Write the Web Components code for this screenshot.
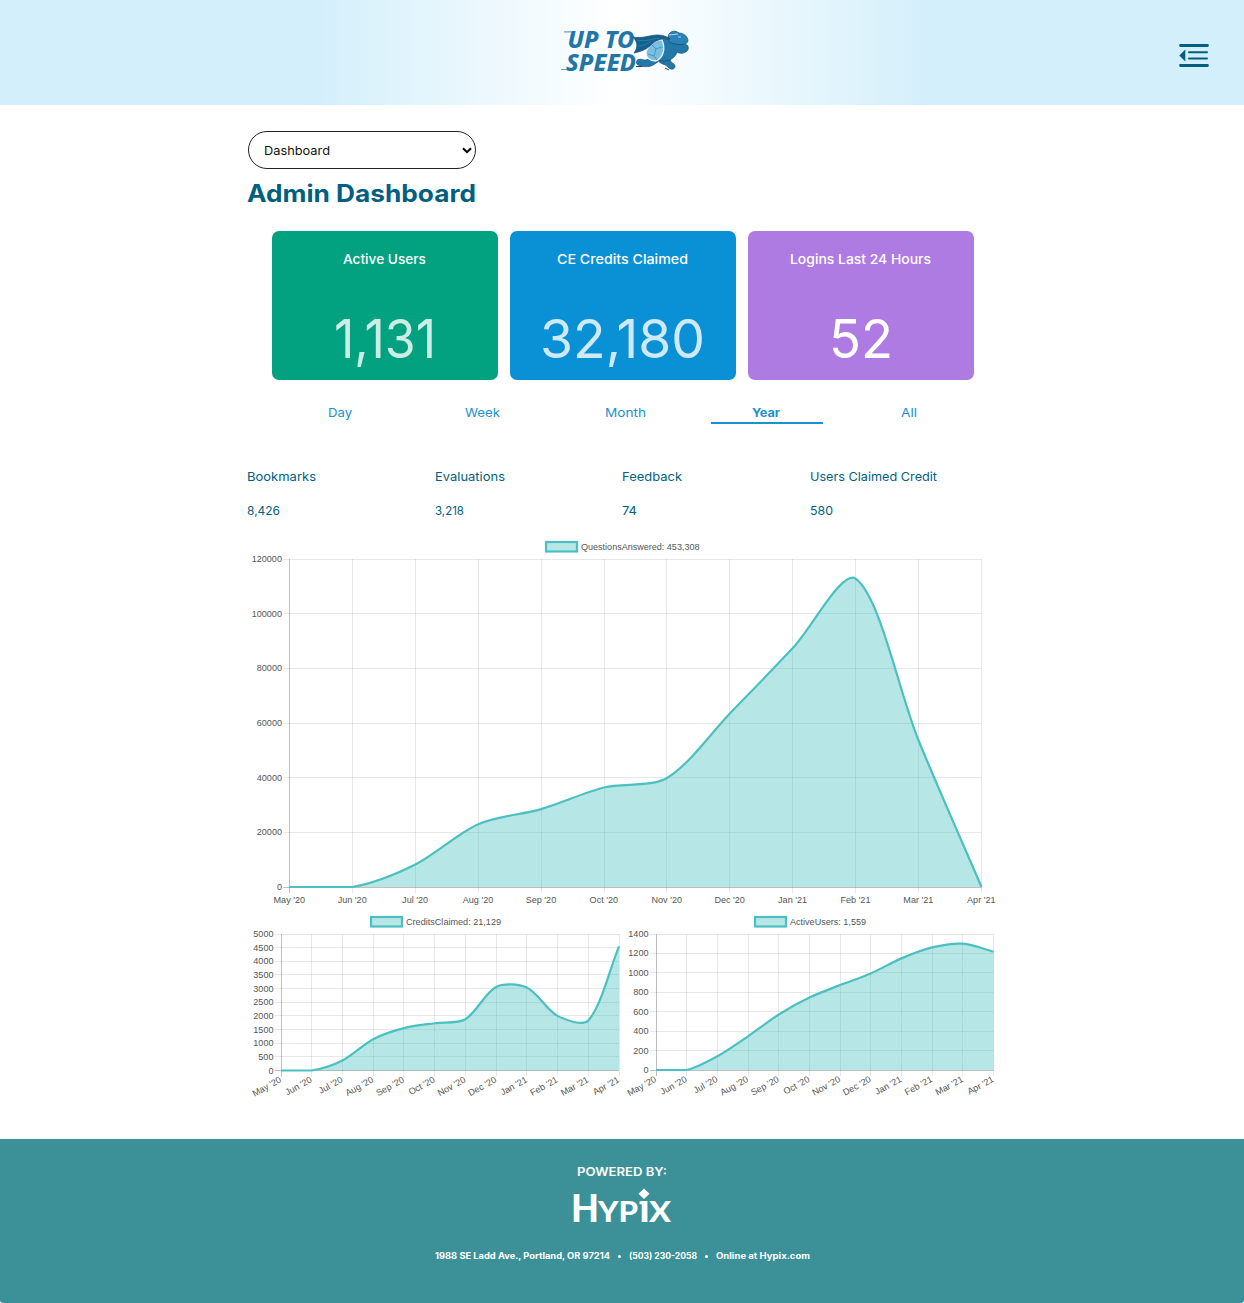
<!DOCTYPE html>
<html lang="en">
<head>
<meta charset="utf-8">
<title>Admin Dashboard</title>
<style>
    body {
        margin: 0;
        background: #fff;
        color: #035f7f;
        font-family: Inter, "Open Sans", sans-serif;
        font-size: 12px;
    }
</style>
</head>
<body>
<admin-page></admin-page>

<script>
(function () {
    // Text stretched to a fixed width, whatever the font's own widths are
    class FitText extends HTMLElement {
        constructor() {
            super();
            this.attachShadow({mode: 'open'}).innerHTML = `
                <style>
                    :host { display: inline-block; white-space: nowrap; }
                    span { display: inline-block; transform-origin: 0 50%; }
                </style>
                <span><slot></slot></span>
            `;
        }

        connectedCallback() {
            const span = this.shadowRoot.querySelector('span');
            const width = parseFloat(this.getAttribute('width'));
            this.style.width = 'auto';
            const natural = span.getBoundingClientRect().width;
            this.style.width = width + 'px';
            if (natural) {
                span.style.transform = 'scaleX(' + width / natural + ')';
            }
        }
    }

    class SiteHeader extends HTMLElement {
        constructor() {
            super();
            this.attachShadow({mode: 'open'}).innerHTML = `
                <style>
                    :host {
                        display: grid;
                        grid-template-columns: 1fr auto 1fr;
                        height: 105px;
                        background: linear-gradient(90deg, #d3effb 25%, #fff 50%, #d3effb 75%);
                    }
                    .logo { grid-column: 2; margin: 24px 0 0 5px; width: 140px; height: 54px; overflow: visible; }
                    .menu { grid-column: 3; justify-self: end; margin: 42px 34px 0 0; width: 32px; height: 27px; }
                    svg { display: block; }
                    text {
                        font: italic 800 22.5px "Noto Sans", "Open Sans", sans-serif;
                        fill: #2176a8;
                    }
                </style>
                <svg class="logo" viewBox="0 0 140 54">
                    <path d="M9 7.800h7M6 45.500h8" stroke="#5fa3c9" stroke-width="1.200"/>
                    <text x="12.500" y="24" textLength="67" lengthAdjust="spacingAndGlyphs">UP TO</text>
                    <text x="11" y="46.500" textLength="70" lengthAdjust="spacingAndGlyphs">SPEED</text>
                    <g stroke="#174a6b" stroke-width=".7" stroke-linejoin="round">
                        <path fill="#2378aa" d="M97 30c-4 5-4 6-8 6-5-2-9 0-7 4 3 3 10 3 14 2 5-2 8-5 10-8z"/>
                        <path fill="#2378aa" d="M105 34c6 0 11 1 11 4 1 1 4 2 4 4 0 4-5 4-7 1-2-3-9-3-10-7z"/>
                        <path fill="#2378aa" d="M107 16c7-2 13 1 14 5 3-4 9-2 12 1 1 4-1 6-5 7-3 1-6-1-6-1-2 6-8 10-16 9-6-2-7-12 1-21z"/>
                        <path fill="#2a83b5" d="M113 14c0-6 6-9 11-5 5 0 9 4 9 8-1 4-8 4-12 3-4 0-8-2-8-6z"/>
                        <path fill="#79bde0" stroke="#eaf6fc" stroke-width="1.300" d="M107 16c-5-1-13 4-16 12 0 5 3 9 10 9 7-3 10-12 6-21z"/>
                        <path fill="none" stroke="#3486b4" d="M97 21l4 4 6-2m-6 2-2 7-6-2m6 2 3 4"/>
                        <path fill="#16608f" d="M78 13c9 2 17-2 24-2 5 0 9 1 13 4-8-1-14 1-18 5-5 5-9 7-18 9 4-5 4-11-1-16z"/>
                        <path fill="none" stroke="#3486b4" d="M82 16c9 2 15-1 22-2M83 22c6 0 9-2 13-5"/>
                    </g>
                    <path d="M114 11l9-1M123 13h3" stroke="#a9dafa" fill="none"/>
                    <path d="M81 42.500h6M110 44l4 2" stroke="#174a6b" fill="none"/>
                </svg>
                <svg class="menu" viewBox="0 0 32 27" stroke="#035f7f" stroke-linecap="round">
                    <path stroke-width="2.800" d="M2.500 3.500h27M2.500 23.500h27"/>
                    <path stroke-width="2" d="M11 10.300h18M11 16.500h18"/>
                    <path fill="#035f7f" stroke="none" d="M7.300 7.500v12L1.300 13.500z"/>
                </svg>
            `;
        }
    }

    class PageSelect extends HTMLElement {
        constructor() {
            super();
            this.attachShadow({mode: 'open'}).innerHTML = `
                <style>
                    :host {
                        display: flex;
                        align-items: center;
                        justify-content: space-between;
                        box-sizing: border-box;
                        width: 228px;
                        height: 38px;
                        padding: 0 3px 0 15px;
                        border: 1px solid #222;
                        border-radius: 19px;
                        color: #111;
                    }
                </style>
                <slot></slot>
                <svg width="10" height="7" viewBox="0 0 10 7"><path d="M1 1.200l4 4 4-4" fill="none" stroke="#000" stroke-width="2"/></svg>
            `;
        }
    }

    class StatCard extends HTMLElement {
        constructor() {
            super();
            this.attachShadow({mode: 'open'}).innerHTML = `
                <style>
                    :host {
                        display: flex;
                        flex-direction: column;
                        align-items: center;
                        box-sizing: border-box;
                        height: 149px;
                        padding: 19px 1px 0 0;
                        border-radius: 7px;
                        color: #fff;
                        background: var(--card-color);
                    }
                    .title { font-size: 13.500px; font-weight: 500; line-height: 18px; }
                    .value {
                        margin-top: 41px;
                        font-size: 54px;
                        font-weight: 400;
                        line-height: 60px;
                        color: var(--value-color, #fff);
                    }
                </style>
                <div class="title"><slot name="title"></slot></div>
                <div class="value"><slot></slot></div>
            `;
        }
    }

    class RangeTab extends HTMLElement {
        constructor() {
            super();
            this.attachShadow({mode: 'open'}).innerHTML = `
                <style>
                    :host {
                        display: block;
                        box-sizing: border-box;
                        width: 112px;
                        height: 22px;
                        padding-right: 2px;
                        line-height: 21px;
                        text-align: center;
                        color: #1a91d0;
                    }
                    :host([active]) { font-weight: 700; border-bottom: 2px solid #1a91d0; }
                </style>
                <slot></slot>
            `;
        }
    }

    class StatItem extends HTMLElement {
        constructor() {
            super();
            this.attachShadow({mode: 'open'}).innerHTML = `
                <style>
                    :host { display: flex; flex-direction: column; gap: 14px; line-height: 20px; }
                </style>
                <slot name="label"></slot>
                <slot></slot>
            `;
        }
    }

    const MONTHS = ["May '20", "Jun '20", "Jul '20", "Aug '20", "Sep '20", "Oct '20",
        "Nov '20", "Dec '20", "Jan '21", "Feb '21", "Mar '21", "Apr '21"];

    class AreaChart extends HTMLElement {
        constructor() {
            super();
            this.attachShadow({mode: 'open'});
        }

        connectedCallback() {
            const nums = name => this.getAttribute(name).split(',').map(Number);
            const [w, h] = nums('size');
            const [left, top, right, bottom] = nums('area');
            const [legendX, legendWidth] = nums('legend');
            const [max, step] = nums('scale');
            const values = nums('values');
            const tilted = this.hasAttribute('tilted');
            const px = i => left + (right - left) * i / (values.length - 1);
            const py = v => bottom - (bottom - top) * v / max;
            const points = values.map((v, i) => ({x: px(i), y: py(v)}));
            let grid = '';
            let labels = '';

            for (let v = 0; v <= max; v += step) {
                const y = Math.floor(py(v)) + .5;
                grid += `<path d="M${left - 6} ${y}H${right}" ${v === 0 ? 'class="zero"' : ''}/>`;
                labels += `<text x="${left - 7.5}" y="${py(v) + 3}" text-anchor="end">${v}</text>`;
            }
            MONTHS.forEach((month, i) => {
                const x = Math.floor(px(i)) + .5;
                grid += `<path d="M${x} ${top}V${bottom + 6}" ${i === 0 ? 'class="zero"' : ''}/>`;
                labels += tilted
                    ? `<text transform="translate(${px(i) + 1} ${bottom + 11}) rotate(-29)" text-anchor="end">${month}</text>`
                    : `<text x="${px(i) - .2}" y="${bottom + 15.5}" text-anchor="middle">${month}</text>`;
            });

            const line = this._curve(points, top, bottom);
            this.shadowRoot.innerHTML = `
                <style>
                    :host { display: block; width: ${w}px; height: ${h}px; }
                    svg { display: block; }
                    text { font: 9.1px "Liberation Sans", Arial, sans-serif; fill: #555; }
                    .grid path { stroke: rgba(0, 0, 0, .09); fill: none; }
                    .grid .zero { stroke: rgba(0, 0, 0, .25); }
                    .box, .fill { fill: rgba(75, 192, 192, .4); }
                    .box, .line { stroke: #4bc0c0; stroke-width: 2.2; }
                    .line { fill: none; }
                </style>
                <svg width="${w}" height="${h}" viewBox="0 0 ${w} ${h}">
                    <rect class="box" x="${legendX + 1}" y="${top - 17}" width="31" height="9.500"/>
                    <text x="${legendX + 36}" y="${top - 9}" textLength="${legendWidth}" lengthAdjust="spacingAndGlyphs">${this.getAttribute('label')}</text>
                    <g class="grid">${grid}</g>
                    <path class="fill" d="${line}L${right} ${bottom}L${left} ${bottom}Z"/>
                    <svg x="${left}" y="${top - 2}" width="${right - left + 1}" height="${bottom - top + 4}" viewBox="${left} ${top - 2} ${right - left + 1} ${bottom - top + 4}">
                        <path class="line" d="${line}"/>
                    </svg>
                    ${labels}
                </svg>
            `;
        }

        // Bezier path through the points, handles kept inside the plot
        _curve(points, top, bottom) {
            const tension = .3;
            const clamp = y => Math.max(top, Math.min(bottom, y));
            const handles = points.map((p, i) => {
                const prev = points[i - 1] || p;
                const next = points[i + 1] || p;
                const d01 = Math.hypot(p.x - prev.x, p.y - prev.y);
                const d12 = Math.hypot(next.x - p.x, next.y - p.y);
                const fa = tension * d01 / (d01 + d12);
                const fb = tension * d12 / (d01 + d12);
                return {
                    inX: p.x - fa * (next.x - prev.x),
                    inY: clamp(p.y - fa * (next.y - prev.y)),
                    outX: p.x + fb * (next.x - prev.x),
                    outY: clamp(p.y + fb * (next.y - prev.y))
                };
            });
            let d = `M${points[0].x} ${points[0].y}`;
            for (let i = 1; i < points.length; i++) {
                const a = handles[i - 1];
                const b = handles[i];
                d += `C${a.outX} ${a.outY} ${b.inX} ${b.inY} ${points[i].x} ${points[i].y}`;
            }
            return d;
        }
    }

    class SiteFooter extends HTMLElement {
        constructor() {
            super();
            this.attachShadow({mode: 'open'}).innerHTML = `
                <style>
                    :host {
                        display: flex;
                        flex-direction: column;
                        align-items: center;
                        box-sizing: border-box;
                        height: 164px;
                        padding-top: 23px;
                        border-radius: 0 0 3px 3px;
                        background: #3c9199;
                        color: #fff;
                        font-weight: 600;
                    }
                    .powered { font-size: 12px; line-height: 20px; }
                    svg { display: block; margin-top: 2px; }
                    text { font-family: Lato, sans-serif; font-weight: 900; fill: #fff; }
                    .address {
                        display: flex;
                        gap: 8px;
                        align-items: center;
                        margin-top: 14px;
                        font-size: 9px;
                        font-weight: 700;
                        line-height: 16px;
                    }
                    i { width: 3px; height: 3px; border-radius: 50%; background: #fff; margin-top: 1px; }
                </style>
                <div class="powered"><fit-text width="90">POWERED BY:</fit-text></div>
                <svg width="104" height="50" viewBox="-2 -4 104 50">
                    <text x="-1" y="34" font-size="38" textLength="28" lengthAdjust="spacingAndGlyphs">H</text>
                    <text x="26" y="34" font-size="29" textLength="40" lengthAdjust="spacingAndGlyphs">YP</text>
                    <text x="67" y="34" font-size="29" textLength="11" lengthAdjust="spacingAndGlyphs">I</text>
                    <text x="77" y="34" font-size="29" textLength="22" lengthAdjust="spacingAndGlyphs">X</text>
                    <path fill="#fff" d="M67.500 13.300h4v3h-4zM72 .5l5.500 5.200-5.500 5.200-5.500-5.200z"/>
                </svg>
                <div class="address">
                    <fit-text width="175">1988 SE Ladd Ave., Portland, OR 97214</fit-text><i></i>
                    <fit-text width="68">(503) 230-2058</fit-text><i></i>
                    <fit-text width="94">Online at Hypix.com</fit-text>
                </div>
            `;
        }
    }

    class AdminPage extends HTMLElement {
        constructor() {
            super();
            this.attachShadow({mode: 'open'}).innerHTML = `
                <style>
                    :host { display: flex; flex-direction: column; min-height: 1303px; }
                    main { width: 750px; margin: 0 auto; padding-top: 26px; flex: 1; }
                    page-select { margin-left: 1px; }
                    h1 { margin: 9px 0 0; font-size: 24px; font-weight: 700; line-height: 32px; }
                    .cards {
                        display: grid;
                        grid-template-columns: repeat(3, 226px);
                        gap: 12px;
                        margin: 21px 0 0 25px;
                    }
                    .tabs { display: flex; justify-content: space-around; margin: 22px 17px 0 22px; }
                    .stats { display: grid; grid-template-columns: repeat(4, 1fr); margin-top: 43px; }
                    .green { --card-color: #02a280; --value-color: #ccece6; }
                    .blue { --card-color: #0a90d5; --value-color: #cee9f7; }
                    .purple { --card-color: #ad7be2; }
                    .charts { display: grid; grid-template-columns: 375px 375px; margin-top: 16px; }
                    .wide { grid-column: 1 / 3; }
                </style>
                <site-header></site-header>
                <main>
                    <page-select><fit-text width="66">Dashboard</fit-text></page-select>
                    <h1><fit-text width="229">Admin Dashboard</fit-text></h1>
                    <section class="cards">
                        <stat-card class="green"><fit-text slot="title" width="83">Active Users</fit-text><fit-text width="102">1,131</fit-text></stat-card>
                        <stat-card class="blue"><fit-text slot="title" width="131">CE Credits Claimed</fit-text><fit-text width="165">32,180</fit-text></stat-card>
                        <stat-card class="purple"><fit-text slot="title" width="141">Logins Last 24 Hours</fit-text><fit-text width="64">52</fit-text></stat-card>
                    </section>
                    <nav class="tabs">
                        <range-tab><fit-text width="24">Day</fit-text></range-tab>
                        <range-tab><fit-text width="35">Week</fit-text></range-tab>
                        <range-tab><fit-text width="41">Month</fit-text></range-tab>
                        <range-tab active><fit-text width="28">Year</fit-text></range-tab>
                        <range-tab><fit-text width="16">All</fit-text></range-tab>
                    </nav>
                    <section class="stats">
                        <stat-item><fit-text slot="label" width="69">Bookmarks</fit-text><fit-text width="33">8,426</fit-text></stat-item>
                        <stat-item><fit-text slot="label" width="70">Evaluations</fit-text><fit-text width="29">3,218</fit-text></stat-item>
                        <stat-item><fit-text slot="label" width="60">Feedback</fit-text><fit-text width="15">74</fit-text></stat-item>
                        <stat-item><fit-text slot="label" width="127">Users Claimed Credit</fit-text><fit-text width="23">580</fit-text></stat-item>
                    </section>
                    <section class="charts">
                        <area-chart class="wide" size="750,375" area="42.5,22,734.5,350" legend="298,118.500"
                            scale="120000,20000" label="QuestionsAnswered: 453,308"
                            values="0,0,8250,23000,28500,36400,39900,63500,87400,112800,53600,0"></area-chart>
                        <area-chart tilted size="375,190" area="34,22,372,158.500" legend="123,95"
                            scale="5000,500" label="CreditsClaimed: 21,129"
                            values="0,0,366,1146,1550,1732,1878,3061,3037,2000,1830,4549"></area-chart>
                        <area-chart tilted size="375,190" area="34,22,371.5,158" legend="132,76"
                            scale="1400,200" label="ActiveUsers: 1,559"
                            values="0,0,141,347,571,746,874,994,1149,1262,1300,1218"></area-chart>
                    </section>
                </main>
                <site-footer></site-footer>
            `;
        }
    }

    customElements.define('site-header', SiteHeader);
    customElements.define('page-select', PageSelect);
    customElements.define('stat-card', StatCard);
    customElements.define('range-tab', RangeTab);
    customElements.define('stat-item', StatItem);
    customElements.define('area-chart', AreaChart);
    customElements.define('site-footer', SiteFooter);
    customElements.define('admin-page', AdminPage);
    // Last, so that the parents' fonts apply when the widths are measured
    customElements.define('fit-text', FitText);
})();
</script>
</body>
</html>
